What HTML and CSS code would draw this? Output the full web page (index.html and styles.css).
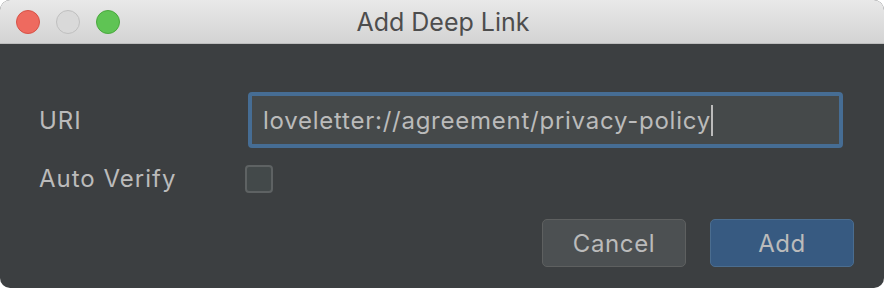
FILE: index.html
```html
<!DOCTYPE html>
<html>
<head>
	<title>Add Deep Link</title>
	<link rel="stylesheet" href="styles.css">
</head>
<body>
<div class="window">
	<div class="titlebar">
		<div class="lights">
			<span class="light close"></span>
			<span class="light min"></span>
			<span class="light zoom"></span>
		</div>
		<div class="title">Add Deep Link</div>
	</div>
	<div class="content">
		<div class="row">
			<label class="label">URI</label>
			<div class="field"><span class="value">loveletter://agreement/privacy-policy</span><span class="caret"></span></div>
		</div>
		<div class="row check-row">
			<label class="label">Auto Verify</label>
			<span class="checkbox"></span>
		</div>
		<div class="buttons">
			<button class="btn">Cancel</button>
			<button class="btn primary">Add</button>
		</div>
	</div>
</div>
</body>
</html>
```

FILE: styles.css
```css
html, body {
	margin: 0;
	padding: 0;
	background: #ffffff;
}
body {
	font-family: Inter, "Noto Sans", "Liberation Sans", sans-serif;
}
.window {
	width: 884px;
	height: 288px;
	border-radius: 10px;
	overflow: hidden;
	background: #3c3f41;
	display: flex;
	flex-direction: column;
}
.titlebar {
	height: 43px;
	flex: none;
	background: linear-gradient(#e9e9e9, #d3d3d3);
	border-bottom: 1px solid #bdbdbd;
	position: relative;
	display: flex;
	align-items: center;
	justify-content: center;
}
.lights {
	position: absolute;
	left: 16px;
	top: 10px;
	display: flex;
	gap: 16px;
}
.light {
	width: 22px;
	height: 22px;
	border-radius: 50%;
	border: 1px solid;
}
.close {
	background: #ee6a5f;
	border-color: #d65247;
}
.min {
	background: #d9d9d9;
	border-color: #bfbfbf;
}
.zoom {
	background: #5fc454;
	border-color: #4aa83e;
}
.title {
	font-size: 25px;
	color: #4d4d4d;
	margin-left: 2px;
}
.content {
	flex: 1;
	padding: 48px 41px 0 39px;
	color: #bbbbbb;
}
.row {
	display: flex;
	align-items: center;
}
.label {
	font-size: 24px;
	letter-spacing: 1px;
	width: 209px;
}
.field {
	flex: 1;
	height: 56px;
	box-sizing: border-box;
	border: 4px solid #466d94;
	border-radius: 4px;
	background: #45494a;
	display: flex;
	align-items: center;
	padding-left: 11px;
	font-size: 24px;
	letter-spacing: 0.75px;
	color: #bbbbbb;
}
.caret {
	width: 2px;
	height: 31px;
	background: #bbbbbb;
	margin-left: 0;
}
.check-row {
	margin-top: 16px;
}
.checkbox {
	width: 24px;
	height: 24px;
	border: 2px solid #5e6263;
	border-radius: 4px;
	background: #43494a;
	margin-left: -3px;
}
.buttons {
	display: flex;
	justify-content: flex-end;
	gap: 24px;
	margin-top: 26px;
	margin-right: -11px;
}
.btn {
	width: 144px;
	height: 48px;
	border-radius: 5px;
	border: 1px solid #5e6060;
	background: #4c5052;
	color: #bbbbbb;
	font-family: inherit;
	font-size: 24px;
	letter-spacing: 0.6px;
}
.primary {
	background: #375a81;
	border-color: #4b6d8f;
}
```
